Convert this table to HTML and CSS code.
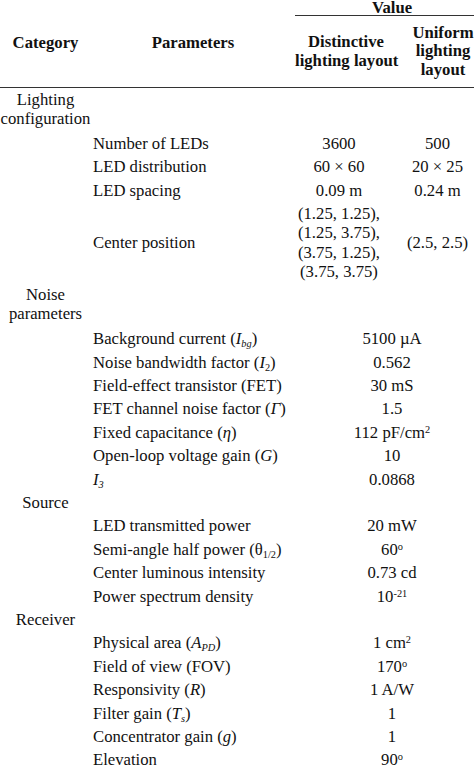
FILE: index.html
```html
<!DOCTYPE html>
<html>
<head>
<meta charset="utf-8">
<link rel="stylesheet" href="styles.css">
</head>
<body>
<table class="tbl">
  <colgroup>
    <col class="c1"><col class="c2"><col class="c3"><col class="c4">
  </colgroup>
  <thead>
    <tr>
      <th class="hcat hb" rowspan="2">Category</th>
      <th class="hpar hb" rowspan="2">Parameters</th>
      <th class="hval" colspan="2">Value</th>
    </tr>
    <tr>
      <th class="hsub hb">Distinctive<br>lighting layout</th>
      <th class="hsub hb">Uniform<br>lighting<br>layout</th>
    </tr>
  </thead>
  <tbody>
    <tr><td class="cat cat2">Lighting<br>configuration</td><td></td><td></td><td></td></tr>
    <tr><td></td><td class="par">Number of LEDs</td><td class="v3">3600</td><td class="v4">500</td></tr>
    <tr><td></td><td class="par">LED distribution</td><td class="v3">60 × 60</td><td class="v4">20 × 25</td></tr>
    <tr><td></td><td class="par">LED spacing</td><td class="v3">0.09 m</td><td class="v4">0.24 m</td></tr>
    <tr><td></td><td class="par">Center position</td><td class="v3">(1.25, 1.25),<br>(1.25, 3.75),<br>(3.75, 1.25),<br>(3.75, 3.75)</td><td class="v4">(2.5, 2.5)</td></tr>
    <tr><td class="cat cat2">Noise<br>parameters</td><td></td><td></td><td></td></tr>
    <tr><td></td><td class="par">Background current (<i>I<sub>bg</sub></i>)</td><td class="vm" colspan="2">5100 µA</td></tr>
    <tr><td></td><td class="par">Noise bandwidth factor (<i>I</i><sub>2</sub>)</td><td class="vm" colspan="2">0.562</td></tr>
    <tr><td></td><td class="par">Field-effect transistor (FET)</td><td class="vm" colspan="2">30 mS</td></tr>
    <tr><td></td><td class="par">FET channel noise factor (<i>Γ</i>)</td><td class="vm" colspan="2">1.5</td></tr>
    <tr><td></td><td class="par">Fixed capacitance (<i>η</i>)</td><td class="vm" colspan="2">112 pF/cm<sup>2</sup></td></tr>
    <tr><td></td><td class="par">Open-loop voltage gain (<i>G</i>)</td><td class="vm" colspan="2">10</td></tr>
    <tr><td></td><td class="par"><i>I<sub>3</sub></i></td><td class="vm" colspan="2">0.0868</td></tr>
    <tr><td class="cat">Source</td><td></td><td></td><td></td></tr>
    <tr><td></td><td class="par">LED transmitted power</td><td class="vm" colspan="2">20 mW</td></tr>
    <tr><td></td><td class="par">Semi-angle half power (θ<sub>1/2</sub>)</td><td class="vm" colspan="2">60<sup>o</sup></td></tr>
    <tr><td></td><td class="par">Center luminous intensity</td><td class="vm" colspan="2">0.73 cd</td></tr>
    <tr><td></td><td class="par">Power spectrum density</td><td class="vm" colspan="2">10<sup>-21</sup></td></tr>
    <tr><td class="cat">Receiver</td><td></td><td></td><td></td></tr>
    <tr><td></td><td class="par">Physical area (<i>A<sub>PD</sub></i>)</td><td class="vm" colspan="2">1 cm<sup>2</sup></td></tr>
    <tr><td></td><td class="par">Field of view (FOV)</td><td class="vm" colspan="2">170<sup>o</sup></td></tr>
    <tr><td></td><td class="par">Responsivity (<i>R</i>)</td><td class="vm" colspan="2">1 A/W</td></tr>
    <tr><td></td><td class="par">Filter gain (<i>T<sub>s</sub></i>)</td><td class="vm" colspan="2">1</td></tr>
    <tr><td></td><td class="par">Concentrator gain (<i>g</i>)</td><td class="vm" colspan="2">1</td></tr>
    <tr><td></td><td class="par">Elevation</td><td class="vm" colspan="2">90<sup>o</sup></td></tr>
  </tbody>
</table>
</body>
</html>
```
FILE: styles.css
```css
html, body {
  margin: 0;
  padding: 0;
  background: #ffffff;
  overflow: hidden;
}
body {
  width: 474px;
  height: 769px;
  font-family: "Liberation Serif", "Times New Roman", serif;
  font-size: 16.7px;
  color: #111111;
}
.tbl {
  border-collapse: collapse;
  table-layout: fixed;
  width: 489px;
}
.c1 { width: 91px; }
.c2 { width: 204px; }
.c3 { width: 102px; }
.c4 { width: 92px; }
th {
  font-weight: bold;
  padding: 0;
  text-align: center;
  vertical-align: middle;
  line-height: 18.5px;
  white-space: nowrap;
}
.hval {
  line-height: 15px;
  padding: 0;
  border-bottom: 1px solid #333333;
}
.hb {
  border-bottom: 1px solid #333333;
}
.hsub {
  height: 71px;
}
td {
  padding: 2.1px 0;
  line-height: 19.2px;
  white-space: nowrap;
  vertical-align: middle;
}
.cat { text-align: center; }
.cat2 { padding-bottom: 3.5px; }
.par { text-align: left; padding-left: 2px; }
.v3 { text-align: center; padding-right: 14px; }
.v4 { text-align: center; padding-right: 11px; }
.vm { text-align: center; }
sub, sup {
  font-size: 0.62em;
  line-height: 0;
}
sub { vertical-align: -0.25em; }
sup { vertical-align: 0.5em; }
```
